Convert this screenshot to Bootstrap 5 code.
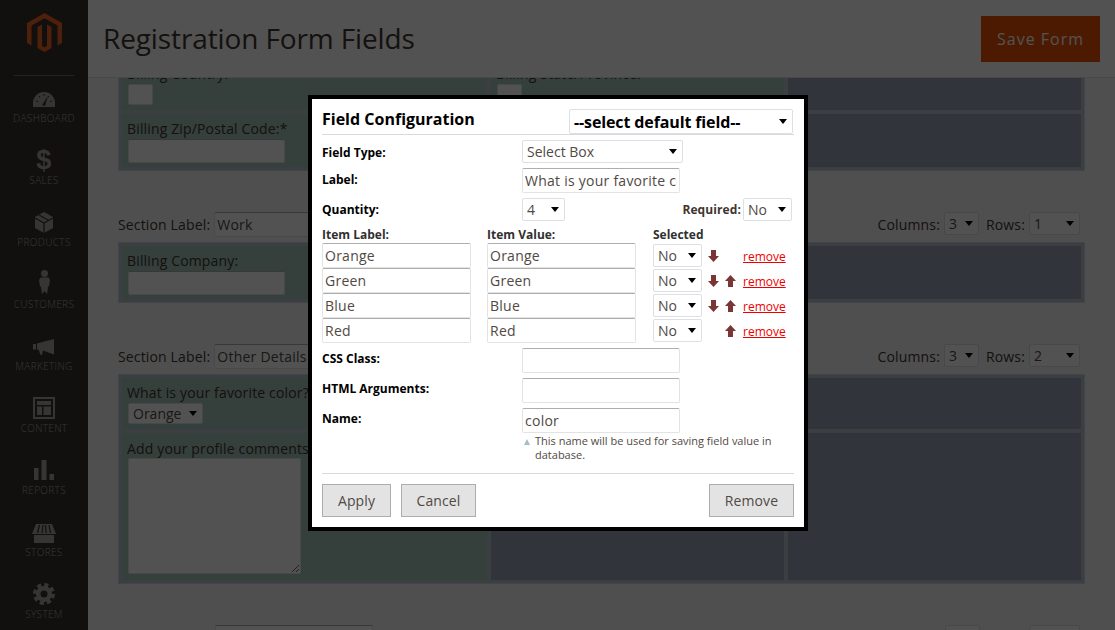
<!DOCTYPE html>
<html lang="en">
<head>
<meta charset="utf-8">
<title>Registration Form Fields</title>
<link href="https://cdn.jsdelivr.net/npm/bootstrap@5.3.0/dist/css/bootstrap.min.css" rel="stylesheet">
<script src="https://cdn.jsdelivr.net/npm/bootstrap@5.3.0/dist/js/bootstrap.bundle.min.js"></script>
<style>
html,body{height:100%;overflow:hidden}
body{font-family:"Open Sans",sans-serif;background:#f5f5f5;color:#41362f;font-size:14px}
.shell{height:630px;overflow:hidden}
.side{width:88px;flex:none;background:#373330;height:630px;overflow:hidden}
.logo-box{height:76px;border-bottom:1px solid #736e69;margin:0 14px;padding-top:13px}
.logo-box svg{display:block;margin:0 auto}
.side-item{height:62px;color:#aaa6a0;font-size:10px;line-height:14px;text-transform:uppercase;letter-spacing:.35px;font-weight:300;white-space:nowrap;text-align:center}
.side-item svg{display:block;width:26px;height:26px;margin:0 auto 0;overflow:visible;fill:#aaa6a0}
.side-list{padding-top:10px}
.dollar{display:block;height:25px;font:700 27px/25px "Liberation Sans",sans-serif;color:#aaa6a0}
.side-item .lbl{display:block;margin-top:-1px}
.side-item .dollar + .lbl{margin-top:0}
.work{flex:1;min-width:0}
.top{height:78px;background:#fff;border-bottom:1px solid #e3e3e3;padding:0 15px 0 15px;position:relative;z-index:2}
.top h1{font-size:28px;font-weight:400;margin:0;color:#41362f;letter-spacing:-.12px}
.save{background:#eb5202;border:0;color:#fff;border-radius:0;width:119px;height:46px;font-size:16px;letter-spacing:1px;padding:0;margin-top:0}
.sections{padding:0 30px;margin-top:-23px;position:relative;z-index:1;letter-spacing:.15px}
.sec{margin-bottom:41px}
.sec-head{height:25px;margin-bottom:5px;line-height:25px}
.sec-name{width:158px;height:25px}
.sec-cols{width:35px;height:23px;align-self:flex-start}
.sec-rows{width:51px;height:23px;align-self:flex-start;margin-right:5px}
.tag{margin-right:4px}
.tag-r{margin-left:7px}
.board{display:grid;grid-template-columns:367px 295px 1fr;gap:2px;border:1px solid #c6d3ea;padding:2px;width:967px;background:#bcc4cc}
.cell{border:1px solid #bcc4cc;padding:5px 5px 0;line-height:20px;min-width:0;white-space:nowrap}
.c-green{background:#a6c4b9}
.c-blue{background:#98a2b6}
.h53{height:53px}.h55{height:55px}.h149{height:149px;padding-top:6px}
.ctl{border:1px solid #e3e3e3;border-top-color:#adadad;border-radius:2px;background-color:#fff;color:#514943;font-size:14px;line-height:20px;padding:0 2px;box-shadow:none;min-height:0;display:block;letter-spacing:.25px}
.pick{border:1px solid #dcdfe3;border-radius:2px;background-color:#fff;color:#514943;font-size:14px;line-height:20px;padding:0 14px 0 4px;min-height:0;box-shadow:none;
background-image:url("data:image/svg+xml,%3Csvg xmlns='http://www.w3.org/2000/svg' viewBox='0 0 8 5'%3E%3Cpath d='M0 0h8L4 5z' fill='%23000'/%3E%3C/svg%3E");background-repeat:no-repeat;background-position:right 5px center;background-size:8px 5px}
.bare{background-image:none;padding:0}
.w-short{width:25px;height:21px;margin:0 0 0 1px}
.w-wide{width:157px;height:24px;margin-left:1px}
.w-or{width:75px;height:21px;margin-left:1px}
.w-area{width:173px;height:116px;padding:2px;margin:-1px 0 0 1px;border-color:#e3e3e3}
.sp-left{margin-left:97px}
.sp-cols{margin-left:auto;margin-right:49px}
.shade{position:fixed;inset:0;background:rgba(0,0,0,.68);z-index:5}
.dlg{position:fixed;left:308px;top:95px;width:500px;height:436px;background:#fff;border:4px solid #000;z-index:6;padding:10px}
.dlg-head{height:25px;border-bottom:1px solid #d9d9d9;margin-bottom:5px;box-sizing:content-box}
.dlg-head h2{font-size:16px;font-weight:700;color:#000;margin:0;line-height:20px}
.dlg-def{width:224px;height:25px;font-size:16px;font-weight:700;color:#000;margin-right:1px;letter-spacing:-.12px}
.line{margin-bottom:5px}
.cap{width:200px;flex:none;font-size:12px;font-weight:700;color:#000;padding-top:3px;line-height:16px;margin:0}
.cap-5{padding-top:5px}.cap-4{padding-top:4px}
.p-type{width:161px;height:23px}
.i-std{width:158px;height:25px;overflow:hidden}
.p-qty{width:43px;height:23px}
.p-req{width:49px;height:23px;margin-left:2px}
.req{font-size:12px;font-weight:700;color:#41362f;margin-left:auto;margin-right:0;letter-spacing:.1px}
.qty-row{width:472px;padding-right:2px;height:23px;margin-bottom:6px}
.heads{height:16px;font-size:12px;font-weight:700;color:#303030;line-height:15px}
.hd-1{width:165px}.hd-2{width:166px}
.it{height:25px}
.i-it{width:149px;height:25px;margin-right:16px}
.i-it2{width:149px;height:25px;margin-right:17px}
.p-no{width:49px;height:23px}
.arrow-slot{width:11px;height:12px;flex:none;margin-left:6px}
.arrow-slot svg{display:block;fill:#7a3535}
.rm{color:#e00;font-size:12px;margin:2px 0 0 7px;text-decoration:underline}
.note{margin-left:200px;font-size:11px;line-height:14px;color:#514943;padding-left:13px;position:relative;margin-top:1px;width:272px}
.note::before{content:"";position:absolute;left:2px;top:5px;border-left:3.5px solid transparent;border-right:3.5px solid transparent;border-bottom:6px solid #a9bcc4}
.dlg-rule{height:1px;background:#d9d9d9;margin:11px 0 10px;opacity:1;border:0}
.act{background:#e3e3e3;border:1px solid #adadad;border-radius:0;color:#514943;font-size:14px;height:33px;padding:0;line-height:31px;letter-spacing:.1px}
.a-apply{width:69px;margin-right:10px}.a-cancel{width:75px}.a-remove{width:85px}
</style>
</head>
<body>
<div class="shell d-flex">
  <nav class="side">
    <div class="logo-box">
      <svg width="35" height="39" viewBox="0 0 35 39" fill="#f26322"><path d="M17.5 0 35 10V30L30.5 32.6V12.6L17.5 5.2 4.5 12.6V32.6L0 30V10Z"/><path d="M10.5 14 15 11.5V33L17.5 34.5 20 33V11.5L24.5 14V35L17.5 39 10.5 35Z"/></svg>
    </div>
    <div class="side-list">
      <div class="side-item"><svg viewBox="0 0 26 26"><path d="M2 21V17A11 11 0 0 1 24 17V21Z"/><path d="M11 19 17 10 14 20Z" fill="#373330"/><path d="M5 15l2 .5M8 10l1 1.500M13 8v2M18 10l-1 1.500M21 15l-2 .5" stroke="#373330" stroke-width="1"/></svg><span class="lbl">Dashboard</span></div>
      <div class="side-item"><span class="dollar">$</span><span class="lbl">Sales</span></div>
      <div class="side-item"><svg viewBox="0 0 26 26"><path d="M13 2 22 7V18L13 23 4 18V7Z"/><path d="M4 8 13 13 22 8M13 13V23M8 5 17 10" fill="none" stroke="#373330" stroke-width="1.300"/></svg><span class="lbl">Products</span></div>
      <div class="side-item"><svg viewBox="0 0 26 26"><circle cx="13.500" cy="1.500" r="3.500"/><path d="M9.500 5.500H17.500L19 8 18 14 17 15 16 22 13.500 19 11 22 10 15 9 14 8 8Z"/></svg><span class="lbl">Customers</span></div>
      <div class="side-item"><svg viewBox="0 0 26 26"><path d="M2 10H5V15.500H2ZM6 9.500 23 5V20.500L12 16.500 11 21H9.500L7.500 15.500 6 15.500Z"/></svg><span class="lbl">Marketing</span></div>
      <div class="side-item"><svg viewBox="0 0 26 26"><path d="M2 1H24V23H2ZM4 3V21H22V3Z" fill-rule="evenodd"/><path d="M6 5H20V9H6ZM6 10.500H11V19H6ZM12.500 10.500H20V19H12.500Z"/></svg><span class="lbl">Content</span></div>
      <div class="side-item"><svg viewBox="0 0 26 26"><path d="M3 10H7.500V22H3ZM10.500 2H15.500V22H10.500ZM18.500 16H23V22H18.500Z"/></svg><span class="lbl">Reports</span></div>
      <div class="side-item"><svg viewBox="0 0 26 26"><path d="M5 4H21L25 14H1Z"/><path d="M3 15H23V23H3Z"/><path d="M8.500 5 6.500 13M12 5 11 13M14.500 5 15 13M18 5 19.500 13" stroke="#373330" stroke-width="1.200" fill="none"/></svg><span class="lbl">Stores</span></div>
      <div class="side-item"><svg viewBox="0 0 26 26"><circle cx="13" cy="12" r="9" fill="none" stroke="#aaa6a0" stroke-width="4" stroke-dasharray="4 3.070"/><circle cx="13" cy="12" r="8"/><circle cx="13" cy="12" r="3.500" fill="#373330"/></svg><span class="lbl">System</span></div>
    </div>
  </nav>
  <div class="work">
    <header class="top d-flex align-items-center justify-content-between">
      <h1>Registration Form Fields</h1>
      <button type="button" class="btn save">Save Form</button>
    </header>
    <div class="sections">
      <section class="sec">
        <div class="board">
          <div class="cell c-green h53">Billing Country:<select class="form-select pick bare w-short" aria-label="Billing Country"></select></div>
          <div class="cell c-green h53">Billing State/Province:<select class="form-select pick bare w-short" aria-label="Billing State"></select></div>
          <div class="cell c-blue h53"></div>
          <div class="cell c-green h55">Billing Zip/Postal Code:*<input class="form-control ctl w-wide" aria-label="Zip"></div>
          <div class="cell c-blue h55"></div>
          <div class="cell c-blue h55"></div>
        </div>
      </section>
      <section class="sec">
        <div class="sec-head d-flex align-items-center">
          <span class="tag">Section Label:</span><input class="form-control ctl sec-name" value="Work" aria-label="Section label">
          <span class="tag ms-auto">Columns:</span><select class="form-select pick sec-cols" aria-label="Columns"><option>3</option></select>
          <span class="tag tag-r">Rows:</span><select class="form-select pick sec-rows" aria-label="Rows"><option>1</option></select>
        </div>
        <div class="board">
          <div class="cell c-green h55">Billing Company:<input class="form-control ctl w-wide" aria-label="Company"></div>
          <div class="cell c-blue h55"></div>
          <div class="cell c-blue h55"></div>
        </div>
      </section>
      <section class="sec">
        <div class="sec-head d-flex align-items-center">
          <span class="tag">Section Label:</span><input class="form-control ctl sec-name" value="Other Details" aria-label="Section label">
          <span class="tag ms-auto">Columns:</span><select class="form-select pick sec-cols" aria-label="Columns"><option>3</option></select>
          <span class="tag tag-r">Rows:</span><select class="form-select pick sec-rows" aria-label="Rows"><option>2</option></select>
        </div>
        <div class="board">
          <div class="cell c-green h53">What is your favorite color?<select class="form-select pick w-or" aria-label="Favorite color"><option>Orange</option></select></div>
          <div class="cell c-blue h53"></div>
          <div class="cell c-blue h53"></div>
          <div class="cell c-green h149">Add your profile comments:<textarea class="ctl w-area" aria-label="Comments"></textarea></div>
          <div class="cell c-blue h149"></div>
          <div class="cell c-blue h149"></div>
        </div>
      </section>
      <section class="sec">
        <div class="sec-head d-flex align-items-center">
          <input class="form-control ctl sec-name sp-left" aria-label="Section label">
          <select class="form-select pick bare sec-cols sp-cols" aria-label="Columns"></select>
          <select class="form-select pick bare sec-rows" aria-label="Rows"></select>
        </div>
      </section>
    </div>
  </div>
</div>
<div class="shade"></div>
<div class="dlg" role="dialog" aria-label="Field Configuration">
  <div class="dlg-head d-flex justify-content-between align-items-start">
    <h2>Field Configuration</h2>
    <select class="form-select pick dlg-def" aria-label="Default field"><option>--select default field--</option></select>
  </div>
  <div class="d-flex line"><label class="cap cap-5">Field Type:</label><select class="form-select pick p-type" aria-label="Field Type"><option>Select Box</option></select></div>
  <div class="d-flex line"><label class="cap cap-4">Label:</label><input class="form-control ctl i-std" value="What is your favorite color?" aria-label="Label"></div>
  <div class="d-flex align-items-start qty-row">
    <label class="cap cap-4">Quantity:</label><select class="form-select pick p-qty" aria-label="Quantity"><option>4</option></select>
    <label class="req cap cap-4 w-auto">Required:</label><select class="form-select pick p-req" aria-label="Required"><option>No</option></select>
  </div>
  <div class="d-flex heads"><span class="hd-1">Item Label:</span><span class="hd-2">Item Value:</span><span>Selected</span></div>
  <div class="d-flex align-items-center it"><input class="form-control ctl i-it" value="Orange" aria-label="Item label"><input class="form-control ctl i-it2" value="Orange" aria-label="Item value"><select class="form-select pick p-no" aria-label="Selected"><option>No</option></select>
    <span class="arrow-slot"><svg width="11" height="12" viewBox="0 0 11 12"><path d="M3 0H8V6H11L5.500 12 0 6H3Z"/></svg></span><span class="arrow-slot"></span><a href="#" class="rm">remove</a></div>
  <div class="d-flex align-items-center it"><input class="form-control ctl i-it" value="Green" aria-label="Item label"><input class="form-control ctl i-it2" value="Green" aria-label="Item value"><select class="form-select pick p-no" aria-label="Selected"><option>No</option></select>
    <span class="arrow-slot"><svg width="11" height="12" viewBox="0 0 11 12"><path d="M3 0H8V6H11L5.500 12 0 6H3Z"/></svg></span><span class="arrow-slot"><svg width="11" height="12" viewBox="0 0 11 12"><path d="M3 12H8V6H11L5.500 0 0 6H3Z"/></svg></span><a href="#" class="rm">remove</a></div>
  <div class="d-flex align-items-center it"><input class="form-control ctl i-it" value="Blue" aria-label="Item label"><input class="form-control ctl i-it2" value="Blue" aria-label="Item value"><select class="form-select pick p-no" aria-label="Selected"><option>No</option></select>
    <span class="arrow-slot"><svg width="11" height="12" viewBox="0 0 11 12"><path d="M3 0H8V6H11L5.500 12 0 6H3Z"/></svg></span><span class="arrow-slot"><svg width="11" height="12" viewBox="0 0 11 12"><path d="M3 12H8V6H11L5.500 0 0 6H3Z"/></svg></span><a href="#" class="rm">remove</a></div>
  <div class="d-flex align-items-center it line"><input class="form-control ctl i-it" value="Red" aria-label="Item label"><input class="form-control ctl i-it2" value="Red" aria-label="Item value"><select class="form-select pick p-no" aria-label="Selected"><option>No</option></select>
    <span class="arrow-slot"></span><span class="arrow-slot"><svg width="11" height="12" viewBox="0 0 11 12"><path d="M3 12H8V6H11L5.500 0 0 6H3Z"/></svg></span><a href="#" class="rm">remove</a></div>
  <div class="d-flex line"><label class="cap">CSS Class:</label><input class="form-control ctl i-std" aria-label="CSS Class"></div>
  <div class="d-flex line"><label class="cap">HTML Arguments:</label><input class="form-control ctl i-std" aria-label="HTML Arguments"></div>
  <div class="d-flex"><label class="cap">Name:</label><input class="form-control ctl i-std" value="color" aria-label="Name"></div>
  <div class="note">This name will be used for saving field value in database.</div>
  <hr class="dlg-rule">
  <div class="d-flex">
    <button type="button" class="btn act a-apply">Apply</button>
    <button type="button" class="btn act a-cancel">Cancel</button>
    <button type="button" class="btn act a-remove ms-auto">Remove</button>
  </div>
</div>
</body>
</html>
